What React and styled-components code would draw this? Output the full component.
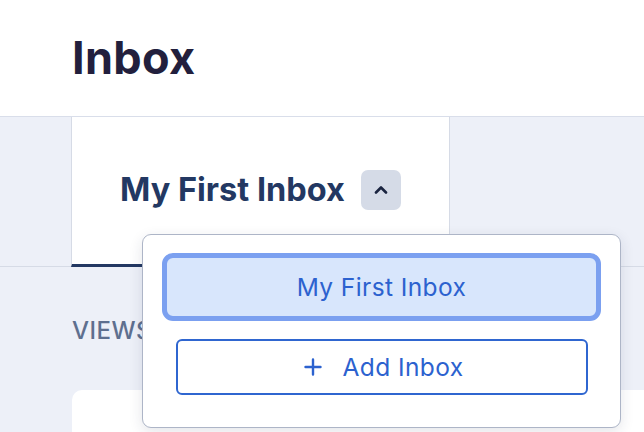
import styled, { createGlobalStyle } from "styled-components";

const Global = createGlobalStyle`
  html, body {
    margin: 0;
    padding: 0;
    background: #edf0f8;
    font-family: Inter, "Noto Sans", sans-serif;
    overflow: hidden;
  }
  * {
    box-sizing: border-box;
  }
`;

const Page = styled.div`
  width: 644px;
  height: 432px;
  overflow: hidden;
  background: #edf0f8;
`;

const Header = styled.header`
  height: 117px;
  background: #ffffff;
  border-bottom: 1px solid #d9deea;
  display: flex;
  align-items: center;
  padding-left: 72px;
  padding-bottom: 2px;
`;

const Title = styled.h1`
  margin: 0;
  font-size: 45px;
  font-weight: 700;
  color: #221f3d;
  letter-spacing: 0.3px;
`;

const TabBar = styled.div`
  height: 150px;
  display: flex;
  padding-left: 71px;
  border-bottom: 1px solid #d6dbe6;
`;

const TabWrap = styled.div`
  position: relative;
`;

const Tab = styled.div`
  width: 379px;
  height: 150px;
  background: #ffffff;
  border-left: 1px solid #d6dbe6;
  border-right: 1px solid #d6dbe6;
  border-bottom: 3px solid #233862;
  display: flex;
  align-items: center;
  justify-content: center;
  gap: 16px;
  padding-bottom: 2px;
`;

const TabLabel = styled.span`
  font-size: 32.5px;
  font-weight: 700;
  color: #233862;
`;

const ChevronButton = styled.button`
  width: 40px;
  height: 40px;
  border: none;
  border-radius: 7px;
  background: #d5dbe7;
  display: flex;
  align-items: center;
  justify-content: center;
  padding: 0;
  color: #1a2440;
`;

const Dropdown = styled.div`
  position: absolute;
  top: 117px;
  left: 71px;
  width: 479px;
  height: 194px;
  background: #ffffff;
  border: 1.5px solid #adb5c7;
  border-radius: 9px;
  box-shadow: 0 4px 14px rgba(30, 40, 70, 0.12);
  display: flex;
  flex-direction: column;
  align-items: center;
  padding-top: 18px;
  gap: 18px;
  z-index: 5;
`;

const InboxOption = styled.button`
  width: ${({ $w }) => $w}px;
  height: ${({ $h }) => $h}px;
  border-radius: ${({ $selected }) => ($selected ? "11px" : "6px")};
  border: ${({ $selected }) =>
    $selected ? "5px solid #7ba0f0" : "2px solid #2f66d0"};
  background: ${({ $selected }) => ($selected ? "#d8e6fc" : "#ffffff")};
  color: #2c62cf;
  font-family: Inter, "Noto Sans", sans-serif;
  font-size: 24.5px;
  font-weight: 400;
  letter-spacing: 0.4px;
  display: flex;
  align-items: center;
  justify-content: center;
  gap: 21px;
  padding: 0;
  padding-left: ${({ $selected }) => ($selected ? "0" : "4px")};
`;

const Body = styled.div`
  padding: 49px 0 0 72px;
`;

const SectionLabel = styled.div`
  font-size: 24px;
  font-weight: 500;
  color: #5e6f8f;
  letter-spacing: 0.5px;
`;

const Card = styled.div`
  margin-top: 45px;
  width: 600px;
  height: 120px;
  background: #ffffff;
  border-radius: 10px;
`;

function ChevronUp() {
  return (
    <svg width="14" height="9" viewBox="0 0 14 9" fill="none">
      <path
        d="M2 7.5 L7 2.5 L12 7.5"
        stroke="currentColor"
        strokeWidth="2.6"
        strokeLinecap="round"
        strokeLinejoin="round"
      />
    </svg>
  );
}

function Plus() {
  return (
    <svg width="18" height="18" viewBox="0 0 18 18" fill="none">
      <path
        d="M9 1.5 V16.5 M1.5 9 H16.5"
        stroke="currentColor"
        strokeWidth="2.4"
        strokeLinecap="round"
      />
    </svg>
  );
}

export default function App() {
  return (
    <Page>
      <Global />
      <Header>
        <Title>Inbox</Title>
      </Header>
      <TabBar>
        <TabWrap>
          <Tab>
            <TabLabel>My First Inbox</TabLabel>
            <ChevronButton aria-label="Close inbox menu">
              <ChevronUp />
            </ChevronButton>
          </Tab>
          <Dropdown>
            <InboxOption $selected $w={439} $h={68}>
              My First Inbox
            </InboxOption>
            <InboxOption $w={412} $h={56}>
              <Plus />
              Add Inbox
            </InboxOption>
          </Dropdown>
        </TabWrap>
      </TabBar>
      <Body>
        <SectionLabel>VIEWS</SectionLabel>
        <Card />
      </Body>
    </Page>
  );
}
